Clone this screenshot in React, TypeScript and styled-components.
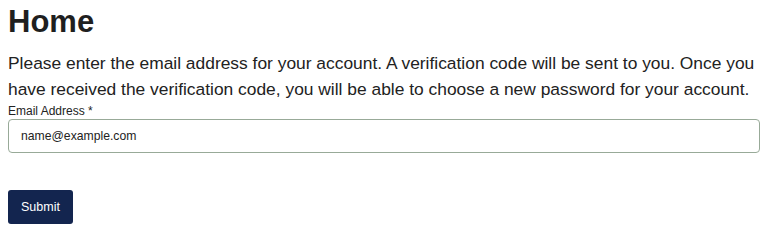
import React from "react";
import styled, { createGlobalStyle } from "styled-components";

const Global = createGlobalStyle`
  body {
    margin: 8px;
    background: #ffffff;
    font-family: "Liberation Sans", Arial, Helvetica, sans-serif;
    color: #212121;
  }
  * { box-sizing: border-box; }
`;

const Page = styled.main`
  display: flex;
  flex-direction: column;
`;

const Title = styled.h1`
  margin: 0;
  font-size: 31px;
  line-height: 28px;
  font-weight: 700;
  color: #1f1f1f;
`;

const Intro = styled.p`
  margin: 14px 0 0;
  font-size: 17.4px;
  line-height: 26px;
  color: #222;
`;

const Form = styled.form`
  display: flex;
  flex-direction: column;
  align-items: flex-start;
  margin-top: 2px;
`;

const Label = styled.label`
  font-size: 12px;
  line-height: 15px;
  color: #222;
`;

const Input = styled.input`
  width: 100%;
  height: 34px;
  padding: 0 12px;
  border: 1px solid #98aa98;
  border-radius: 4px;
  font-family: inherit;
  font-size: 12.2px;
  color: #222;
  background: #fff;
  &::placeholder { color: #222; }
`;

const Submit = styled.button`
  margin-top: 37px;
  height: 34px;
  padding: 0 13px;
  border: none;
  border-radius: 3px;
  background: #13254f;
  color: #fff;
  font-family: inherit;
  font-size: 12.5px;
`;

export default function App() {
  return (
    <>
      <Global />
      <Page>
        <Title>Home</Title>
        <Intro>
          Please enter the email address for your account. A verification code will be sent to you. Once you
          have received the verification code, you will be able to choose a new password for your account.
        </Intro>
        <Form onSubmit={(e) => e.preventDefault()}>
          <Label htmlFor="email">Email Address *</Label>
          <Input id="email" type="email" placeholder="name@example.com" />
          <Submit type="submit">Submit</Submit>
        </Form>
      </Page>
    </>
  );
}
